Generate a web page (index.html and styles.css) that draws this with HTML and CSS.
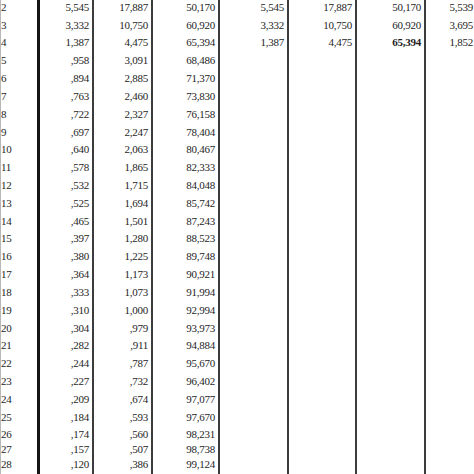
FILE: index.html
```html
<!DOCTYPE html>
<html>
<head>
<meta charset="utf-8">
<link rel="stylesheet" href="styles.css">
</head>
<body>
<div class="table">
  <div class="row"><div class="c lab">2</div><div class="c">5,545</div><div class="c">17,887</div><div class="c">50,170</div><div class="c">5,545</div><div class="c">17,887</div><div class="c">50,170</div><div class="c last">5,539</div></div>
  <div class="row"><div class="c lab">3</div><div class="c">3,332</div><div class="c">10,750</div><div class="c">60,920</div><div class="c">3,332</div><div class="c">10,750</div><div class="c">60,920</div><div class="c last">3,695</div></div>
  <div class="row"><div class="c lab">4</div><div class="c">1,387</div><div class="c">4,475</div><div class="c">65,394</div><div class="c">1,387</div><div class="c">4,475</div><div class="c"><b>65,394</b></div><div class="c last">1,852</div></div>
  <div class="row"><div class="c lab">5</div><div class="c">,958</div><div class="c">3,091</div><div class="c">68,486</div><div class="c"></div><div class="c"></div><div class="c"></div><div class="c last"></div></div>
  <div class="row"><div class="c lab">6</div><div class="c">,894</div><div class="c">2,885</div><div class="c">71,370</div><div class="c"></div><div class="c"></div><div class="c"></div><div class="c last"></div></div>
  <div class="row"><div class="c lab">7</div><div class="c">,763</div><div class="c">2,460</div><div class="c">73,830</div><div class="c"></div><div class="c"></div><div class="c"></div><div class="c last"></div></div>
  <div class="row"><div class="c lab">8</div><div class="c">,722</div><div class="c">2,327</div><div class="c">76,158</div><div class="c"></div><div class="c"></div><div class="c"></div><div class="c last"></div></div>
  <div class="row"><div class="c lab">9</div><div class="c">,697</div><div class="c">2,247</div><div class="c">78,404</div><div class="c"></div><div class="c"></div><div class="c"></div><div class="c last"></div></div>
  <div class="row"><div class="c lab">10</div><div class="c">,640</div><div class="c">2,063</div><div class="c">80,467</div><div class="c"></div><div class="c"></div><div class="c"></div><div class="c last"></div></div>
  <div class="row"><div class="c lab">11</div><div class="c">,578</div><div class="c">1,865</div><div class="c">82,333</div><div class="c"></div><div class="c"></div><div class="c"></div><div class="c last"></div></div>
  <div class="row"><div class="c lab">12</div><div class="c">,532</div><div class="c">1,715</div><div class="c">84,048</div><div class="c"></div><div class="c"></div><div class="c"></div><div class="c last"></div></div>
  <div class="row"><div class="c lab">13</div><div class="c">,525</div><div class="c">1,694</div><div class="c">85,742</div><div class="c"></div><div class="c"></div><div class="c"></div><div class="c last"></div></div>
  <div class="row"><div class="c lab">14</div><div class="c">,465</div><div class="c">1,501</div><div class="c">87,243</div><div class="c"></div><div class="c"></div><div class="c"></div><div class="c last"></div></div>
  <div class="row"><div class="c lab">15</div><div class="c">,397</div><div class="c">1,280</div><div class="c">88,523</div><div class="c"></div><div class="c"></div><div class="c"></div><div class="c last"></div></div>
  <div class="row"><div class="c lab">16</div><div class="c">,380</div><div class="c">1,225</div><div class="c">89,748</div><div class="c"></div><div class="c"></div><div class="c"></div><div class="c last"></div></div>
  <div class="row"><div class="c lab">17</div><div class="c">,364</div><div class="c">1,173</div><div class="c">90,921</div><div class="c"></div><div class="c"></div><div class="c"></div><div class="c last"></div></div>
  <div class="row"><div class="c lab">18</div><div class="c">,333</div><div class="c">1,073</div><div class="c">91,994</div><div class="c"></div><div class="c"></div><div class="c"></div><div class="c last"></div></div>
  <div class="row"><div class="c lab">19</div><div class="c">,310</div><div class="c">1,000</div><div class="c">92,994</div><div class="c"></div><div class="c"></div><div class="c"></div><div class="c last"></div></div>
  <div class="row"><div class="c lab">20</div><div class="c">,304</div><div class="c">,979</div><div class="c">93,973</div><div class="c"></div><div class="c"></div><div class="c"></div><div class="c last"></div></div>
  <div class="row"><div class="c lab">21</div><div class="c">,282</div><div class="c">,911</div><div class="c">94,884</div><div class="c"></div><div class="c"></div><div class="c"></div><div class="c last"></div></div>
  <div class="row"><div class="c lab">22</div><div class="c">,244</div><div class="c">,787</div><div class="c">95,670</div><div class="c"></div><div class="c"></div><div class="c"></div><div class="c last"></div></div>
  <div class="row"><div class="c lab">23</div><div class="c">,227</div><div class="c">,732</div><div class="c">96,402</div><div class="c"></div><div class="c"></div><div class="c"></div><div class="c last"></div></div>
  <div class="row"><div class="c lab">24</div><div class="c">,209</div><div class="c">,674</div><div class="c">97,077</div><div class="c"></div><div class="c"></div><div class="c"></div><div class="c last"></div></div>
  <div class="row"><div class="c lab">25</div><div class="c">,184</div><div class="c">,593</div><div class="c">97,670</div><div class="c"></div><div class="c"></div><div class="c"></div><div class="c last"></div></div>
  <div class="row r26"><div class="c lab">26</div><div class="c">,174</div><div class="c">,560</div><div class="c">98,231</div><div class="c"></div><div class="c"></div><div class="c"></div><div class="c last"></div></div>
  <div class="row r27"><div class="c lab">27</div><div class="c">,157</div><div class="c">,507</div><div class="c">98,738</div><div class="c"></div><div class="c"></div><div class="c"></div><div class="c last"></div></div>
  <div class="row r28"><div class="c lab">28</div><div class="c">,120</div><div class="c">,386</div><div class="c">99,124</div><div class="c"></div><div class="c"></div><div class="c"></div><div class="c last"></div></div>
  <div class="row r29"><div class="c lab"></div><div class="c"></div><div class="c"></div><div class="c"></div><div class="c"></div><div class="c"></div><div class="c"></div><div class="c last"></div></div>
</div>
</body>
</html>
```

FILE: styles.css
```css
html, body {
  margin: 0;
  padding: 0;
  background: #ffffff;
  overflow: hidden;
  width: 474px;
  height: 474px;
}

.table {
  margin-top: -2.2px;
  width: 474px;
  font-family: "Liberation Serif", "Times New Roman", serif;
  font-size: 11px;
  letter-spacing: -0.25px;
  color: #1e1e1e;
}

.row {
  display: grid;
  grid-template-columns: 40px 54px 59px 67px 69px 68px 69px 48px;
  height: 17.84px;
}

.row.r26 { height: 16px; }
.row.r27 { height: 14.5px; }
.row.r28 { height: 15.5px; }
.row.r29 { height: 20px; }

.c {
  box-sizing: border-box;
  display: flex;
  align-items: center;
  justify-content: flex-end;
  padding-right: 3px;
  border-right: 2px solid #3c3c3c;
  white-space: nowrap;
}

.c.lab {
  justify-content: flex-start;
  padding-left: 1px;
  padding-right: 0;
  border-right: 3px solid #151515;
  background: linear-gradient(to right, #b8b8b8 0, #b8b8b8 1.5px, transparent 1.5px);
}

.c.last {
  border-right: none;
  padding-right: 1px;
}

.c b {
  font-weight: bold;
}
```
